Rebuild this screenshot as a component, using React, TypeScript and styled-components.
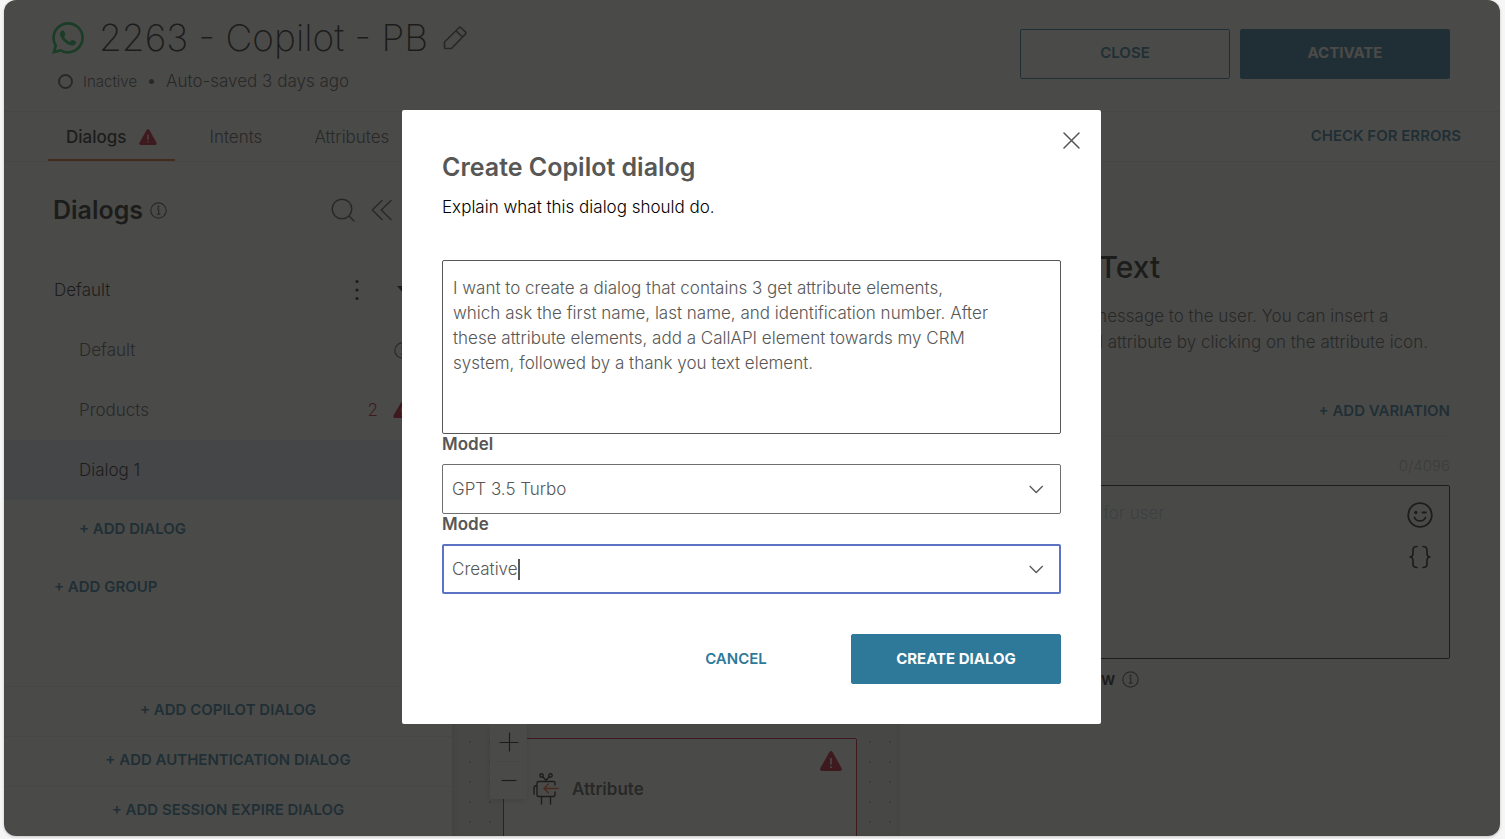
import React from "react";
import styled, { createGlobalStyle } from "styled-components";

const ink = "#1d1d1b";
const grey = "#575756";
const teal = "#2e7899";
const red = "#c4122f";
const line = "#ececec";

const GlobalStyle = createGlobalStyle`
  * { box-sizing: border-box; }
  body {
    margin: 0;
    background: #f6f6f6;
    color: ${grey};
    font: 300 17px/25px Inter, "Liberation Sans", sans-serif;
  }
  button, input, textarea, select { font: inherit; color: inherit; }
  h1, h2, h3, p { margin: 0; }
`;

const Page = styled.div`
  position: relative;
  display: flex;
  flex-direction: column;
  height: calc(100vh - 3px);
  margin: 0 5px 3px 4px;
  overflow: hidden;
  border-radius: 12px;
  background: #fff;
  box-shadow: 0 1px 3px rgba(0, 0, 0, 0.2);
`;

const Header = styled.header`
  display: flex;
  justify-content: space-between;
  height: 112px;
  padding: 18px 50px 0 48px;
  border-bottom: 1px solid ${line};
`;

const TitleRow = styled.div`
  display: flex;
  align-items: center;
  gap: 15px;
  height: 40px;
`;

const BotTitle = styled.h1`
  color: ${ink};
  font-size: 37px;
  font-weight: 200;
  line-height: 40px;
`;

const StatusRow = styled.div`
  display: flex;
  align-items: center;
  gap: 10px;
  height: 25px;
  margin-top: 11px;
  padding-left: 6px;
`;

const StatusRing = styled.span`
  width: 15px;
  height: 15px;
  border: 2px solid ${grey};
  border-radius: 50%;
`;

const StatusText = styled.span`
  font-size: 15px;
`;

const Bullet = styled.span`
  width: 5px;
  height: 5px;
  margin: 0 2px;
  border-radius: 50%;
  background: ${grey};
`;

const HeaderActions = styled.div`
  display: flex;
  gap: 10px;
  padding-top: 11px;
`;

const Button = styled.button<{ $kind: "solid" | "outline" | "plain" }>`
  width: 210px;
  height: 50px;
  padding: 0;
  border: 1px solid ${(p) => (p.$kind === "plain" ? "transparent" : teal)};
  border-radius: 2px;
  background: ${(p) => (p.$kind === "solid" ? teal : "transparent")};
  color: ${(p) => (p.$kind === "solid" ? "#fff" : teal)};
  font-size: 15px;
  font-weight: ${(p) => (p.$kind === "solid" ? 700 : 600)};
  line-height: 20px;

  ${HeaderActions} & {
    padding-bottom: 2px;
  }
`;

const TabBar = styled.nav`
  display: flex;
  justify-content: space-between;
  height: 50px;
  padding: 0 39px 0 44px;
  border-bottom: 1px solid ${line};
`;

const TabList = styled.div`
  display: flex;
  gap: 16px;
`;

const Tab = styled.a<{ $active?: boolean }>`
  display: flex;
  align-items: center;
  gap: 13px;
  height: 49px;
  padding: 3px 18px 0;
  border-bottom: 2px solid ${(p) => (p.$active ? "#e8622c" : "transparent")};
  color: ${(p) => (p.$active ? ink : grey)};
  font-weight: ${(p) => (p.$active ? 500 : 300)};
  text-decoration: none;
`;

const TextButton = styled.button<{ $indent?: number }>`
  align-self: flex-start;
  margin-left: ${(p) => p.$indent ?? 0}px;
  padding: 0;
  border: 0;
  background: none;
  color: ${teal};
  font-size: 15px;
  font-weight: 600;
  line-height: 48px;
`;

const Workspace = styled.main`
  display: grid;
  flex: 1;
  grid-template-columns: 448px 1fr 600px;
  min-height: 0;
`;

const Sidebar = styled.aside`
  display: flex;
  flex-direction: column;
  min-height: 0;
`;

const SidebarHead = styled.div`
  display: flex;
  align-items: center;
  height: 98px;
  padding: 0 60px 2px 49px;
`;

const SidebarTitle = styled.h2`
  margin-right: 7px;
  color: ${ink};
  font-size: 25px;
  font-weight: 600;
  line-height: 32px;
`;

const SidebarTools = styled.div`
  display: flex;
  gap: 16px;
  margin-left: auto;
`;

const IconButton = styled.button`
  display: flex;
  padding: 0;
  border: 0;
  background: none;
`;

const Row = styled.div<{ $level: 0 | 1; $selected?: boolean }>`
  display: flex;
  align-items: center;
  justify-content: space-between;
  height: 60px;
  padding: 0 41px 0 ${(p) => (p.$level === 0 ? 50 : 75)}px;
  background: ${(p) => (p.$selected ? "#e6ebf7" : "transparent")};
  color: ${(p) => (p.$level === 0 || p.$selected ? ink : grey)};
`;

const RowTools = styled.div<{ $gap: number }>`
  display: flex;
  align-items: center;
  gap: ${(p) => p.$gap}px;
`;

const ErrorCount = styled.span`
  color: ${red};
`;

const AddActions = styled.div`
  display: flex;
  flex-direction: column;
  gap: 10px;
  padding: 5px 0 0 50px;
`;

const SidebarFoot = styled.div`
  display: flex;
  flex-direction: column;
  margin-top: auto;
`;

const FootButton = styled.button`
  height: 50px;
  padding: 0 0 4px;
  border: 0;
  border-top: 1px solid ${line};
  background: none;
  color: ${teal};
  font-size: 15px;
  font-weight: 600;
`;

const Canvas = styled.section`
  position: relative;
  overflow: hidden;
  background-color: #f1f1f1;
  background-image: radial-gradient(circle, #b4b4b4 1px, transparent 1px);
  background-position: 8px 10px;
  background-size: 20px 20px;
  box-shadow: inset 4px 0 4px #dfdfdf, inset -3px 0 4px #e2e2e2;
`;

const Node = styled.article`
  position: absolute;
  top: 576px;
  left: 51px;
  display: flex;
  gap: 13px;
  width: 354px;
  height: 140px;
  padding: 34px 14px 0 29px;
  border: 1px solid ${red};
  border-radius: 2px;
  background: #fff;
`;

const NodeTitle = styled.h3`
  flex: 1;
  padding-top: 4px;
  color: ${grey};
  font-size: 17px;
  font-weight: 600;
`;

const NodeAlert = styled.div`
  margin-top: -22px;
`;

const ZoomControls = styled.div`
  position: absolute;
  bottom: 37px;
  left: 38px;
  display: flex;
  flex-direction: column;
  width: 37px;
  padding: 0 7px;
  border-radius: 2px;
  background: #fff;
  box-shadow: 0 2px 6px rgba(0, 0, 0, 0.15);
`;

const ZoomButton = styled.button`
  display: flex;
  align-items: center;
  justify-content: center;
  height: 38px;
  padding: 0;
  border: 0;
  background: none;
  & + & { border-top: 1px solid ${line}; }
`;

const Inspector = styled.section`
  padding: 86px 50px 0 57px;
  background: #fbfbfb;
`;

const InspectorHead = styled.div`
  display: grid;
  gap: 17px;
  padding-left: 60px;
`;

const InspectorTitle = styled.h2`
  color: ${ink};
  font-size: 30px;
  font-weight: 500;
  line-height: 38px;
`;

const InspectorText = styled.p`
  line-height: 26px;
  white-space: pre-line;
`;

const VariationBar = styled.div`
  display: flex;
  justify-content: flex-end;
  margin-top: 32px;
  border-bottom: 1px solid ${line};
`;

const Counter = styled.div`
  padding: 17px 0 7px;
  color: #b8b8b8;
  font-size: 15px;
  text-align: right;
`;

const MessageBox = styled.div`
  display: flex;
  height: 174px;
  padding: 14px 16px;
  border: 1px solid ${ink};
  border-radius: 2px;
`;

const MessageInput = styled.textarea`
  flex: 1;
  padding: 1px 0 0 7px;
  border: 0;
  outline: 0;
  background: none;
  resize: none;
  &::placeholder { color: #bccbd3; opacity: 1; }
`;

const MessageTools = styled.div`
  display: flex;
  flex-direction: column;
  gap: 17px;
  padding-top: 2px;
`;

const PreviewLabel = styled.div`
  display: flex;
  align-items: center;
  gap: 7px;
  margin-top: 8px;
  color: ${ink};
  font-weight: 600;
`;

const Overlay = styled.div`
  position: absolute;
  inset: 0;
  display: flex;
  align-items: center;
  justify-content: center;
  padding: 0 1px 2px 0;
  background: rgba(29, 29, 27, 0.8);
`;

const Modal = styled.form`
  position: relative;
  width: 699px;
  max-width: 100%;
  padding: 40px;
  border-radius: 2px;
  background: #fff;
`;

const CloseButton = styled(IconButton)`
  position: absolute;
  top: 22px;
  right: 21px;
`;

const ModalTitle = styled.h2`
  font-size: 25px;
  font-weight: 600;
  line-height: 35px;
`;

const ModalText = styled.label`
  display: block;
  margin: 10px 0 40px;
  color: #000;
`;

const Prompt = styled.textarea`
  display: block;
  width: 100%;
  height: 174px;
  padding: 15px 67px 15px 10px;
  border: 1px solid ${grey};
  border-radius: 2px;
  outline: 0;
  background: #fff;
  resize: none;
`;

const FieldLabel = styled.label`
  display: block;
  margin-bottom: 10px;
  font-weight: 600;
  line-height: 20px;
`;

const Field = styled.div<{ $focused?: boolean }>`
  display: flex;
  align-items: center;
  height: 50px;
  padding: 0 ${(p) => (p.$focused ? 15 : 16)}px 0 ${(p) => (p.$focused ? 8 : 9)}px;
  border: ${(p) => (p.$focused ? "2px solid #5c72c4" : "1px solid #706f6f")};
  border-radius: 2px;
`;

const Select = styled.select`
  flex: 1;
  padding: 0;
  border: 0;
  outline: 0;
  appearance: none;
  background: none;
`;

const ComboInput = styled.input`
  padding: 0;
  border: 0;
  outline: 0;
  background: none;
  caret-color: transparent;
  field-sizing: content;
`;

const Caret = styled.span`
  width: 2px;
  height: 21px;
  margin-right: auto;
  background: ${grey};
`;

const ModalActions = styled.div`
  display: flex;
  justify-content: flex-end;
  gap: 10px;
  margin-top: 40px;
`;

const WhatsApp = () => (
  <svg width="32" height="32" viewBox="0 0 24 24" fill="#15b753" aria-hidden="true">
    <path d="M17.472 14.382c-.297-.149-1.758-.867-2.03-.967-.273-.099-.471-.148-.67.15-.197.297-.767.966-.94 1.164-.173.199-.347.223-.644.075-.297-.15-1.255-.463-2.39-1.475-.883-.788-1.48-1.761-1.653-2.059-.173-.297-.018-.458.13-.606.134-.133.298-.347.446-.52.149-.174.198-.298.298-.497.099-.198.05-.371-.025-.52-.075-.149-.669-1.612-.916-2.207-.242-.579-.487-.5-.669-.51-.173-.008-.371-.01-.57-.01-.198 0-.52.074-.792.372-.272.297-1.04 1.016-1.04 2.479 0 1.462 1.065 2.875 1.213 3.074.149.198 2.096 3.2 5.077 4.487.709.306 1.262.489 1.694.625.712.227 1.36.195 1.871.118.571-.085 1.758-.719 2.006-1.413.248-.694.248-1.289.173-1.413-.074-.124-.272-.198-.57-.347m-5.421 7.403h-.004a9.87 9.87 0 01-5.031-1.378l-.361-.214-3.741.982.998-3.648-.235-.374a9.86 9.86 0 01-1.51-5.26c.001-5.45 4.436-9.884 9.888-9.884 2.64 0 5.122 1.03 6.988 2.898a9.825 9.825 0 012.893 6.994c-.003 5.45-4.437 9.884-9.885 9.884m8.413-18.297A11.815 11.815 0 0012.05 0C5.495 0 .16 5.335.157 11.892c0 2.096.547 4.142 1.588 5.945L.057 24l6.305-1.654a11.882 11.882 0 005.683 1.448h.005c6.554 0 11.89-5.335 11.893-11.893a11.821 11.821 0 00-3.48-8.413z" />
  </svg>
);

const Pencil = () => (
  <svg width="24" height="24" viewBox="0 0 24 24" fill="none" stroke={grey} strokeWidth="1.7" strokeLinejoin="round" aria-hidden="true">
    <path d="M1.500 16 16.200 1.500Q17 .8 17.800 1.500L22.600 6.200Q23.300 7 22.600 7.800L8.500 22.500H2.500Q1.500 22.500 1.500 21.500ZM13 4.800 19.500 11" />
  </svg>
);

const Alert = ({ size, height }: { size: number; height: number }) => (
  <svg width={size} height={height} viewBox="0 0 22 20" role="img" aria-label="Error">
    <path d="M9.300 1.200Q11-1 12.700 1.200L21.600 17Q22.600 19.700 20 20H2Q-.6 19.700 .4 17Z" fill={red} />
    <path d="M11 7v6.500M11 15.200v1.800" stroke="#fff" strokeWidth="1.600" />
  </svg>
);

const Info = () => (
  <svg width="17" height="17" viewBox="0 0 17 17" fill="none" stroke={grey} strokeWidth="1.200" role="img" aria-label="More information">
    <circle cx="8.500" cy="8.500" r="7.700" />
    <path d="M7 7h1.700v5M6.800 12.200h3.600" />
    <circle cx="8.500" cy="4.700" r=".5" fill={grey} />
  </svg>
);

const Search = () => (
  <svg width="24" height="24" viewBox="0 0 24 24" fill="none" stroke={grey} strokeWidth="1.500" strokeLinecap="round" aria-hidden="true">
    <circle cx="11" cy="11" r="9.800" />
    <path d="m18 18 5 5" />
  </svg>
);

const Collapse = () => (
  <svg width="21" height="24" viewBox="0 0 21 24" fill="none" stroke={grey} strokeWidth="1.500" strokeLinecap="round" aria-hidden="true">
    <path d="M11 2.500 1.300 12 11 21.500M20 2.500 10.300 12 20 21.500" />
  </svg>
);

const Kebab = () => (
  <svg width="4" height="22" viewBox="0 0 4 22" fill={ink} aria-hidden="true">
    <circle cx="2" cy="2.500" r="1.600" />
    <circle cx="2" cy="11" r="1.600" />
    <circle cx="2" cy="19.500" r="1.600" />
  </svg>
);

const CaretDown = () => (
  <svg width="14" height="8" viewBox="0 0 14 8" fill={ink} aria-hidden="true">
    <path d="M0 0h14L7 8z" />
  </svg>
);

const Cross = () => (
  <svg width="17" height="17" viewBox="0 0 17 17" stroke={grey} strokeWidth="1.500" strokeLinecap="round" aria-hidden="true">
    <path d="m1 1 15 15M16 1 1 16" />
  </svg>
);

const Chevron = () => (
  <svg width="15" height="9" viewBox="0 0 15 9" fill="none" stroke={grey} strokeWidth="1.300" aria-hidden="true">
    <path d="m.7 1 6.500 6.500L13.700 1" />
  </svg>
);

const Smiley = () => (
  <svg width="26" height="26" viewBox="0 0 26 26" fill="none" stroke={ink} strokeWidth="1.800" strokeLinecap="round" aria-hidden="true">
    <circle cx="13" cy="13" r="11.800" />
    <path d="M7.500 15.500c2 4.600 9 4.600 11 0M15.500 10.500h3.500" />
    <circle cx="8.800" cy="10.500" r=".8" fill={ink} />
  </svg>
);

const Braces = () => (
  <svg width="26" height="24" viewBox="0 0 26 24" fill="none" stroke={ink} strokeWidth="1.700" strokeLinecap="round" aria-hidden="true">
    <path d="M10 1.500c-3 0-4 .8-4 3.500v3.500C6 10.800 5 12 2.500 12 5 12 6 13.200 6 15.500V19c0 2.700 1 3.500 4 3.500M16 1.500c3 0 4 .8 4 3.500v3.500c0 2.300 1 3.500 3.500 3.500-2.500 0-3.500 1.200-3.500 3.500V19c0 2.700-1 3.500-4 3.500" />
  </svg>
);

const Robot = () => (
  <svg width="26" height="32" viewBox="0 0 26 32" fill="none" stroke={ink} strokeWidth="1.400" strokeLinecap="round" aria-hidden="true">
    <circle cx="8.500" cy="2.500" r="1.700" />
    <circle cx="17.500" cy="2.500" r="1.700" />
    <path d="M9.700 3.800 13 7.300 16.300 3.800M22 12V10Q22 8.500 20.500 8.500H5.500Q4 8.500 4 10V22Q4 23.500 5.500 23.500H20.500Q22 23.500 22 22V19M4 12.500Q1 12.500 1 15V21M8.500 24v7M17.500 24v7" />
    <path d="M25 15.500H11.500M15.500 11 11 15.500l4.500 4.500" stroke="#e8622c" />
  </svg>
);

const Plus = () => (
  <svg width="20" height="20" viewBox="0 0 20 20" stroke={ink} strokeWidth="1.200" aria-hidden="true">
    <path d="M.5 10.500h19M10.500 .5v19" />
  </svg>
);

const Minus = () => (
  <svg width="16" height="3" viewBox="0 0 16 3" stroke={ink} strokeWidth="1.200" aria-hidden="true">
    <path d="M.5 1.500h15" />
  </svg>
);

const promptText =
  "I want to create a dialog that contains 3 get attribute elements, which ask the first name, last name, and identification number. After these attribute elements, add a CallAPI element towards my CRM system, followed by a thank you text element.";

export default function App() {
  return (
    <>
      <GlobalStyle />
      <Page>
        <Header>
          <div>
            <TitleRow>
              <WhatsApp />
              <BotTitle>2263 - Copilot - PB</BotTitle>
              <IconButton type="button" aria-label="Rename"><Pencil /></IconButton>
            </TitleRow>
            <StatusRow>
              <StatusRing />
              <StatusText>Inactive</StatusText>
              <Bullet />
              <span>Auto-saved 3 days ago</span>
            </StatusRow>
          </div>
          <HeaderActions>
            <Button type="button" $kind="outline">CLOSE</Button>
            <Button type="button" $kind="solid">ACTIVATE</Button>
          </HeaderActions>
        </Header>

        <TabBar>
          <TabList>
            <Tab href="#dialogs" $active>Dialogs <Alert size={18} height={16} /></Tab>
            <Tab href="#intents">Intents</Tab>
            <Tab href="#attributes">Attributes</Tab>
          </TabList>
          <TextButton type="button">CHECK FOR ERRORS</TextButton>
        </TabBar>

        <Workspace>
          <Sidebar>
            <SidebarHead>
              <SidebarTitle>Dialogs</SidebarTitle>
              <Info />
              <SidebarTools>
                <IconButton type="button" aria-label="Search dialogs"><Search /></IconButton>
                <IconButton type="button" aria-label="Collapse sidebar"><Collapse /></IconButton>
              </SidebarTools>
            </SidebarHead>
            <Row $level={0}>
              Default
              <RowTools $gap={38}>
                <Kebab />
                <CaretDown />
              </RowTools>
            </Row>
            <Row $level={1}>Default <Info /></Row>
            <Row $level={1}>
              Products
              <RowTools $gap={15}>
                <ErrorCount>2</ErrorCount>
                <Alert size={18} height={16} />
              </RowTools>
            </Row>
            <Row $level={1} $selected>Dialog 1</Row>
            <AddActions>
              <TextButton type="button" $indent={25}>+ ADD DIALOG</TextButton>
              <TextButton type="button">+ ADD GROUP</TextButton>
            </AddActions>
            <SidebarFoot>
              <FootButton type="button">+ ADD COPILOT DIALOG</FootButton>
              <FootButton type="button">+ ADD AUTHENTICATION DIALOG</FootButton>
              <FootButton type="button">+ ADD SESSION EXPIRE DIALOG</FootButton>
            </SidebarFoot>
          </Sidebar>

          <Canvas>
            <Node>
              <Robot />
              <NodeTitle>Attribute</NodeTitle>
              <NodeAlert><Alert size={22} height={20} /></NodeAlert>
            </Node>
            <ZoomControls>
              <ZoomButton type="button" aria-label="Zoom in"><Plus /></ZoomButton>
              <ZoomButton type="button" aria-label="Zoom out"><Minus /></ZoomButton>
            </ZoomControls>
          </Canvas>

          <Inspector>
            <InspectorHead>
              <InspectorTitle>Send Text</InspectorTitle>
              <InspectorText>{"Send the message to the user. You can insert a\npredefined attribute by clicking on the attribute icon."}</InspectorText>
            </InspectorHead>
            <VariationBar>
              <TextButton type="button">+ ADD VARIATION</TextButton>
            </VariationBar>
            <Counter>0/4096</Counter>
            <MessageBox>
              <MessageInput aria-label="Message" placeholder="Enter message for user" />
              <MessageTools>
                <IconButton type="button" aria-label="Insert emoji"><Smiley /></IconButton>
                <IconButton type="button" aria-label="Insert attribute"><Braces /></IconButton>
              </MessageTools>
            </MessageBox>
            <PreviewLabel>Enable link preview <Info /></PreviewLabel>
          </Inspector>
        </Workspace>

        <Overlay>
          <Modal role="dialog" aria-labelledby="modal-title" onSubmit={(e) => e.preventDefault()}>
            <CloseButton type="button" aria-label="Close dialog"><Cross /></CloseButton>
            <ModalTitle id="modal-title">Create Copilot dialog</ModalTitle>
            <ModalText htmlFor="prompt">Explain what this dialog should do.</ModalText>
            <Prompt id="prompt" defaultValue={promptText} />
            <FieldLabel htmlFor="model">Model</FieldLabel>
            <Field>
              <Select id="model" defaultValue="gpt35">
                <option value="gpt35">GPT 3.5 Turbo</option>
                <option value="gpt4">GPT 4</option>
              </Select>
              <Chevron />
            </Field>
            <FieldLabel htmlFor="mode">Mode</FieldLabel>
            <Field $focused>
              <ComboInput id="mode" role="combobox" aria-expanded="false" defaultValue="Creative" />
              <Caret />
              <Chevron />
            </Field>
            <ModalActions>
              <Button type="button" $kind="plain">CANCEL</Button>
              <Button type="submit" $kind="solid">CREATE DIALOG</Button>
            </ModalActions>
          </Modal>
        </Overlay>
      </Page>
    </>
  );
}
